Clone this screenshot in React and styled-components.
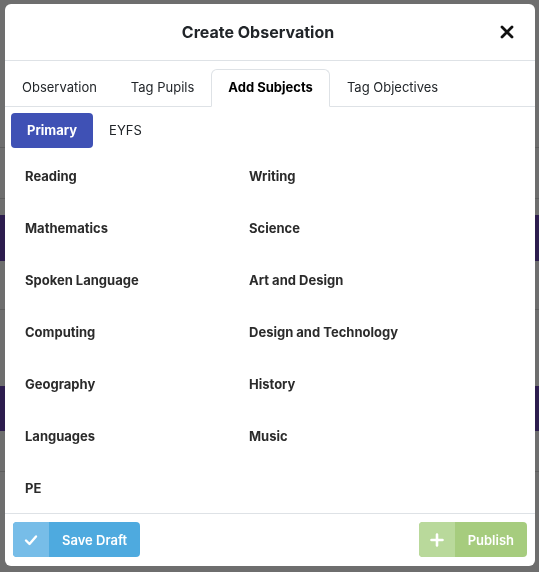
import React, { useState } from "react";
import styled, { createGlobalStyle } from "styled-components";

const GlobalStyle = createGlobalStyle`
  html, body {
    margin: 0;
    padding: 0;
    height: 100%;
    overflow: hidden;
  }
  body {
    font-family: Inter, "Liberation Sans", Arial, sans-serif;
    background: #dcdcdc;
    color: #212529;
  }
`;

/* page behind the dialog */
const Page = styled.div`
  display: flex;
  flex-direction: column;
  height: 572px;
`;

const PageRow = styled.div`
  height: ${(p) => p.h}px;
  background: ${(p) => (p.band ? "#5b3a9c" : "transparent")};
  border-bottom: ${(p) => (p.line ? "1px solid #bdbdbd" : "none")};
  flex-shrink: 0;
`;

const Overlay = styled.div`
  position: fixed;
  inset: 0;
  background: rgba(0, 0, 0, 0.5);
  padding: 4px 4px 6px 5px;
  display: flex;
  align-items: flex-start;
`;

const Modal = styled.div`
  width: 530px;
  height: 562px;
  background: #fff;
  border-radius: 6px;
  display: flex;
  flex-direction: column;
  overflow: hidden;
`;

const Header = styled.div`
  height: 56px;
  flex-shrink: 0;
  display: flex;
  align-items: center;
  justify-content: center;
  padding-right: 24px;
  position: relative;
  border-bottom: 1px solid #dee2e6;
`;

const Title = styled.h5`
  margin: 0;
  font-size: 16px;
  font-weight: 700;
  color: #212529;
`;

const CloseButton = styled.button`
  position: absolute;
  right: 21px;
  top: 21px;
  width: 14px;
  height: 14px;
  padding: 0;
  border: none;
  background: none;
  display: flex;
  cursor: pointer;
`;

const Tabs = styled.div`
  display: flex;
  align-items: flex-end;
  margin-top: 8px;
  border-bottom: 1px solid #dee2e6;
  flex-shrink: 0;
`;

const Tab = styled.button`
  font-family: inherit;
  font-size: 13px;
  line-height: 20px;
  padding: 7px 16px 9px;
  margin-bottom: -1px;
  background: ${(p) => (p.active ? "#fff" : "transparent")};
  color: ${(p) => (p.active ? "#000" : "#212529")};
  font-weight: ${(p) => (p.active ? 700 : 400)};
  border: 1px solid ${(p) => (p.active ? "#dee2e6" : "transparent")};
  border-bottom-color: ${(p) => (p.active ? "#fff" : "transparent")};
  border-radius: 6px 6px 0 0;
  cursor: pointer;
`;

const Body = styled.div`
  flex: 1;
  padding: 6px 6px 0;
  overflow: hidden;
`;

const Pills = styled.div`
  display: flex;
  margin-bottom: 2px;
`;

const Pill = styled.button`
  font-family: inherit;
  font-size: 13px;
  line-height: 19px;
  padding: 8px 16px;
  border: none;
  border-radius: 4px;
  background: ${(p) => (p.active ? "#3f51b5" : "transparent")};
  color: ${(p) => (p.active ? "#fff" : "#212529")};
  font-weight: ${(p) => (p.active ? 700 : 400)};
  cursor: pointer;
`;

const SubjectGrid = styled.div`
  display: grid;
  grid-template-columns: 224px 1fr;
`;

const Subject = styled.div`
  height: 52px;
  box-sizing: border-box;
  padding: 16px 14px;
  font-size: 13px;
  line-height: 20px;
  font-weight: 700;
  color: #2b2b2b;
`;

const Footer = styled.div`
  flex-shrink: 0;
  border-top: 1px solid #dee2e6;
  padding: 8px 8px 9px;
  display: flex;
  justify-content: space-between;
`;

const SplitButton = styled.button`
  display: flex;
  height: 35px;
  padding: 0;
  border: none;
  border-radius: 4px;
  overflow: hidden;
  background: ${(p) => p.main};
  font-family: inherit;
  cursor: pointer;
`;

const ButtonIcon = styled.span`
  width: 36px;
  display: flex;
  align-items: center;
  justify-content: center;
  background: ${(p) => p.light};
`;

const ButtonLabel = styled.span`
  display: flex;
  align-items: center;
  padding: 0 ${(p) => p.pad}px;
  color: #fff;
  font-size: 13px;
  font-weight: 600;
`;

const CloseIcon = () => (
  <svg width="14" height="14" viewBox="0 0 14 14">
    <path d="M2 2L12 12M12 2L2 12" stroke="#111" strokeWidth="2.8" strokeLinecap="round" />
  </svg>
);

const CheckIcon = () => (
  <svg width="14" height="14" viewBox="0 0 14 14">
    <path d="M2 7.5L5.5 11L12 3.5" fill="none" stroke="#fff" strokeWidth="2.4" strokeLinecap="round" strokeLinejoin="round" />
  </svg>
);

const PlusIcon = () => (
  <svg width="14" height="14" viewBox="0 0 14 14">
    <path d="M7 1.5V12.5M1.5 7H12.5" stroke="#fff" strokeWidth="2.6" strokeLinecap="round" />
  </svg>
);

const tabs = ["Observation", "Tag Pupils", "Add Subjects", "Tag Objectives"];

const subjects = [
  "Reading",
  "Writing",
  "Mathematics",
  "Science",
  "Spoken Language",
  "Art and Design",
  "Computing",
  "Design and Technology",
  "Geography",
  "History",
  "Languages",
  "Music",
  "PE",
];

const backRows = [
  { h: 147, line: true },
  { h: 50, line: true },
  { h: 16 },
  { h: 46, band: true },
  { h: 48, line: true },
  { h: 76 },
  { h: 45, band: true },
  { h: 40, line: true },
  { h: 100 },
];

export default function App() {
  const [tab, setTab] = useState("Add Subjects");
  const [group, setGroup] = useState("Primary");

  return (
    <>
      <GlobalStyle />
      <Page>
        {backRows.map((r, i) => (
          <PageRow key={i} h={r.h} band={r.band} line={r.line} />
        ))}
      </Page>
      <Overlay>
        <Modal>
          <Header>
            <Title>Create Observation</Title>
            <CloseButton aria-label="Close">
              <CloseIcon />
            </CloseButton>
          </Header>
          <Tabs>
            {tabs.map((t) => (
              <Tab key={t} active={t === tab} onClick={() => setTab(t)}>
                {t}
              </Tab>
            ))}
          </Tabs>
          <Body>
            <Pills>
              {["Primary", "EYFS"].map((g) => (
                <Pill key={g} active={g === group} onClick={() => setGroup(g)}>
                  {g}
                </Pill>
              ))}
            </Pills>
            <SubjectGrid>
              {subjects.map((s) => (
                <Subject key={s}>{s}</Subject>
              ))}
            </SubjectGrid>
          </Body>
          <Footer>
            <SplitButton main="#4eaadf">
              <ButtonIcon light="#77bde8">
                <CheckIcon />
              </ButtonIcon>
              <ButtonLabel pad={13}>Save Draft</ButtonLabel>
            </SplitButton>
            <SplitButton main="#a6cc7e">
              <ButtonIcon light="#b9d99b">
                <PlusIcon />
              </ButtonIcon>
              <ButtonLabel pad={13}>Publish</ButtonLabel>
            </SplitButton>
          </Footer>
        </Modal>
      </Overlay>
    </>
  );
}
